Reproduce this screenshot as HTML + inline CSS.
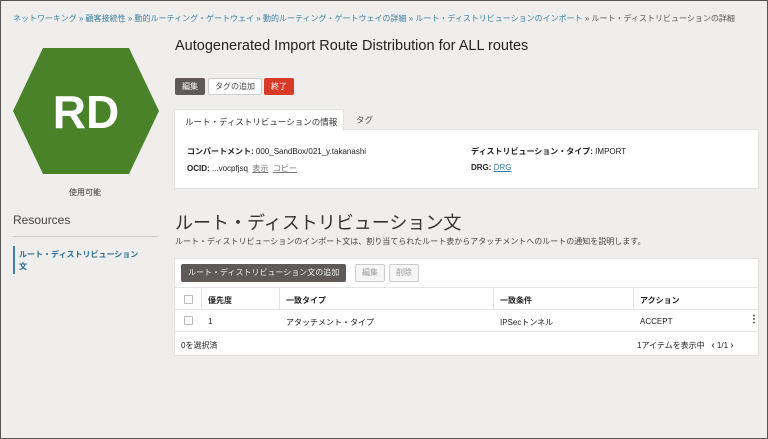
<!DOCTYPE html>
<html><head><meta charset="utf-8"><style>
*{box-sizing:border-box;margin:0;padding:0}
body{width:768px;height:439px;overflow:hidden;background:#efeeec;font-family:"Liberation Sans","Noto Sans CJK JP",sans-serif;color:#222;position:relative;border:1px solid #555}
.a{position:absolute;white-space:nowrap}
.bc{top:12px;left:12px;font-size:8px;color:#3a7ea0}
.bc span{color:#555}
.btn{position:absolute;height:17px;font-size:8px;line-height:15px;padding:0 6px;border:1px solid #ccc;border-radius:2px;white-space:nowrap}
.card{position:absolute;background:#fff;border:1px solid #e2e2e2}
.row{position:absolute;left:0;right:0;border-bottom:1px solid #e4e4e4;font-size:8px}
.cb{position:absolute;left:9px;width:9px;height:9px;border:1px solid #bbb;border-radius:1px}
.vl{position:absolute;top:0;bottom:0;width:1px;background:#e4e4e4}
</style></head><body>
<div class="a bc">ネットワーキング » 顧客接続性 » 動的ルーティング・ゲートウェイ » 動的ルーティング・ゲートウェイの詳細 » ルート・ディストリビューションのインポート <span>» ルート・ディストリビューションの詳細</span></div>
<svg class="a" style="left:12px;top:47px" width="146" height="126"><polygon points="30,0 116,0 146,63 116,126 30,126 0,63" fill="#4a8229"/><text x="73" y="80" text-anchor="middle" font-family="Liberation Sans" font-weight="bold" font-size="46" fill="#fff">RD</text></svg>
<div class="a" style="left:68px;top:186px;font-size:8px;color:#333">使用可能</div>
<div class="a" style="left:12px;top:212px;font-size:12px;color:#444">Resources</div>
<div class="a" style="left:12px;top:235px;width:145px;height:1px;background:#ccc"></div>
<div class="a" style="left:12px;top:245px;width:2px;height:28px;background:#3a7ea0"></div>
<div class="a" style="left:18px;top:248px;font-size:8px;line-height:12px;color:#2a6f93;font-weight:bold;white-space:normal;width:130px">ルート・ディストリビューション<br>文</div>
<div class="a" style="left:174px;top:37px;font-size:14.5px;color:#222">Autogenerated Import Route Distribution for ALL routes</div>
<div class="btn" style="left:174px;top:77px;background:#5f5a57;color:#fff;border-color:#5f5a57">編集</div>
<div class="btn" style="left:207px;top:77px;background:#fff;color:#444">タグの追加</div>
<div class="btn" style="left:263px;top:77px;background:#d73a26;color:#fff;border-color:#d73a26">終了</div>
<div class="card" style="left:173px;top:108px;width:170px;height:22px;border-bottom:none;z-index:2;font-size:8.5px;padding:6px 10px;color:#333;white-space:nowrap">ルート・ディストリビューションの情報</div>
<div class="a" style="left:355px;top:113px;font-size:8.5px;color:#555">タグ</div>
<div class="card" style="left:173px;top:128px;width:585px;height:60px;font-size:8px">
<div class="a" style="left:12px;top:16px"><b>コンパートメント:</b> 000_SandBox/021_y.takanashi</div>
<div class="a" style="left:12px;top:33px"><b>OCID:</b> ...vocpfjsq &nbsp;<u style="color:#777">表示</u> &nbsp;<u style="color:#777">コピー</u></div>
<div class="a" style="left:296px;top:16px"><b>ディストリビューション・タイプ:</b> IMPORT</div>
<div class="a" style="left:296px;top:33px"><b>DRG:</b> <u style="color:#3a7ea0">DRG</u></div>
</div>
<div class="a" style="left:174px;top:208px;font-size:18px;color:#333">ルート・ディストリビューション文</div>
<div class="a" style="left:174px;top:235px;font-size:8px;color:#444">ルート・ディストリビューションのインポート文は、割り当てられたルート表からアタッチメントへのルートの通知を説明します。</div>
<div class="card" style="left:173px;top:257px;width:585px;height:98px">
<div class="btn" style="left:6px;top:5px;height:18px;background:#5f5a57;color:#eee;border-color:#5f5a57;line-height:16px">ルート・ディストリビューション文の追加</div>
<div class="btn" style="left:180px;top:5px;height:18px;color:#999;background:#f6f6f6;line-height:16px">編集</div>
<div class="btn" style="left:214px;top:5px;height:18px;color:#999;background:#f6f6f6;line-height:16px">削除</div>
<div class="row" style="top:28px;height:23px;border-top:1px solid #e4e4e4;font-weight:bold">
<div class="cb" style="top:7px"></div><div class="vl" style="left:26px"></div><div class="vl" style="left:104px"></div><div class="vl" style="left:318px"></div><div class="vl" style="left:458px"></div>
<div class="a" style="left:33px;top:7px">優先度</div><div class="a" style="left:111px;top:7px">一致タイプ</div><div class="a" style="left:325px;top:7px">一致条件</div><div class="a" style="left:465px;top:7px">アクション</div></div>
<div class="row" style="top:51px;height:22px">
<div class="cb" style="top:6px"></div>
<div class="a" style="left:33px;top:7px">1</div><div class="a" style="left:111px;top:7px">アタッチメント・タイプ</div><div class="a" style="left:325px;top:7px">IPSecトンネル</div><div class="a" style="left:465px;top:7px">ACCEPT</div><div class="a" style="left:574px;top:4px;font-weight:bold;font-size:10px">⋮</div></div>
<div class="a" style="left:6px;top:81px;font-size:8px">0を選択済</div>
<div class="a" style="left:462px;top:81px;font-size:8px">1アイテムを表示中 &nbsp;&nbsp;<span style="font-size:10px">‹</span> 1/1 <span style="font-size:10px">›</span></div>
</div>
</body></html>
